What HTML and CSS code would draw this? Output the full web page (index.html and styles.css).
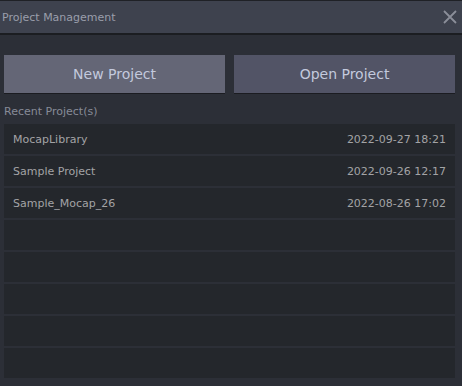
FILE: index.html
```html
<!DOCTYPE html>
<html lang="en">
<head>
    <meta charset="UTF-8">
    <meta name="viewport" content="width=device-width, initial-scale=1.0">
    <title>Project Management</title>
    <link rel="stylesheet" href="styles.css">
</head>
<body>
    <div class="window">
        <div class="title-bar">
            <span class="title">Project Management</span>
            <button class="close" aria-label="Close">
                <svg width="14" height="14" viewBox="0 0 14 14">
                    <path d="M1 1 L13 13 M13 1 L1 13" stroke="#8b8e99" stroke-width="1.8" fill="none"/>
                </svg>
            </button>
        </div>

        <div class="content">
            <div class="button-group">
                <button class="action new">New Project</button>
                <button class="action open">Open Project</button>
            </div>

            <div class="section-label">Recent Project(s)</div>

            <div class="recent-list">
                <div class="recent-item">
                    <span class="name">MocapLibrary</span>
                    <span class="date">2022-09-27 18:21</span>
                </div>
                <div class="recent-item">
                    <span class="name">Sample Project</span>
                    <span class="date">2022-09-26 12:17</span>
                </div>
                <div class="recent-item">
                    <span class="name">Sample_Mocap_26</span>
                    <span class="date">2022-08-26 17:02</span>
                </div>
                <div class="recent-item"></div>
                <div class="recent-item"></div>
                <div class="recent-item"></div>
                <div class="recent-item"></div>
                <div class="recent-item"></div>
            </div>
        </div>
    </div>
</body>
</html>
```

FILE: styles.css
```css
body {
    margin: 0;
    background: #2c2f37;
    font-family: "DejaVu Sans", Verdana, sans-serif;
    overflow: hidden;
}

.window {
    width: 462px;
    height: 386px;
    background: #2c2f37;
}

.title-bar {
    height: 32px;
    border-top: 1px solid #1f2126;
    border-bottom: 2px solid #1b1d21;
    background: #3e424e;
    display: flex;
    align-items: center;
    justify-content: space-between;
    padding: 0 5px 0 2px;
}

.title {
    font-size: 11px;
    color: #9a9eab;
}

.close {
    width: 14px;
    height: 14px;
    padding: 0;
    border: none;
    background: none;
    display: flex;
    margin-right: 0;
}

.content {
    padding: 20px 7px 0 4px;
}

.button-group {
    display: flex;
    gap: 9px;
}

.action {
    flex: 1;
    height: 39px;
    border: none;
    border-bottom: 1px solid #1b1c21;
    font-family: "DejaVu Sans", Verdana, sans-serif;
    font-size: 14px;
    color: #c3c9dd;
    padding: 0;
}

.action.new {
    background: #646676;
}

.action.open {
    background: #525466;
}

.section-label {
    font-size: 11px;
    line-height: 14px;
    color: #878b97;
    margin: 11px 0 5px;
}

.recent-list {
    display: flex;
    flex-direction: column;
    gap: 2px;
}

.recent-item {
    height: 30px;
    background: #24272c;
    display: flex;
    align-items: center;
    justify-content: space-between;
    padding: 0 9px;
    font-size: 11px;
    color: #a3a3a6;
}
```
